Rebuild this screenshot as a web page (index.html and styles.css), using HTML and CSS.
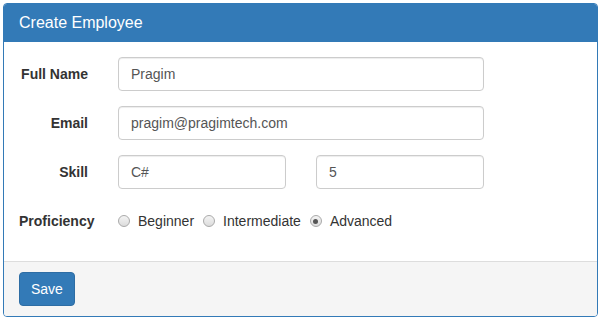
FILE: index.html
```html
<!DOCTYPE html>
<html lang="en">
<head>
  <meta charset="UTF-8" />
  <meta name="viewport" content="width=device-width, initial-scale=1" />
  <title>Create Employee</title>
  <link rel="stylesheet" href="styles.css">
</head>
<body>
  <form class="panel">
    <div class="panel-heading">
      <h3 class="panel-title">Create Employee</h3>
    </div>

    <div class="panel-body">
      <div class="form-group">
        <label class="control-label" for="fullName">Full Name</label>
        <input id="fullName" class="form-control wide" type="text" value="Pragim" />
      </div>

      <div class="form-group">
        <label class="control-label" for="email">Email</label>
        <input id="email" class="form-control wide" type="text" value="pragim@pragimtech.com" />
      </div>

      <div class="form-group">
        <label class="control-label" for="skillName">Skill</label>
        <input id="skillName" class="form-control half" type="text" value="C#" />
        <input id="skillYears" class="form-control half" type="text" value="5" />
      </div>

      <div class="form-group">
        <label class="control-label">Proficiency</label>
        <div class="radios">
          <label class="radio-option"><input type="radio" name="proficiency" value="beginner" />Beginner</label>
          <label class="radio-option"><input type="radio" name="proficiency" value="intermediate" />Intermediate</label>
          <label class="radio-option"><input type="radio" name="proficiency" value="advanced" checked />Advanced</label>
        </div>
      </div>
    </div>

    <div class="panel-footer">
      <button type="button" class="btn">Save</button>
    </div>
  </form>
</body>
</html>
```

FILE: styles.css
```css
body {
  margin: 3px;
  font-family: "Liberation Sans", Arial, sans-serif;
  font-size: 14px;
  line-height: 20px;
  color: #333;
  background-color: #fff;
}
.panel {
  margin: 0;
  border: 1px solid #337ab7;
  border-radius: 4px;
  background: #fff;
}
.panel-heading {
  padding: 10px 15px;
  background-color: #337ab7;
  border-bottom: 1px solid #337ab7;
  border-radius: 3px 3px 0 0;
  color: #fff;
}
.panel-title {
  margin: 0;
  font-size: 16px;
  font-weight: normal;
  line-height: 17px;
}
.panel-body {
  padding: 15px;
}
.form-group {
  display: flex;
  align-items: flex-start;
  margin-bottom: 15px;
}
.control-label {
  flex: none;
  width: 69px;
  margin-right: 30px;
  padding-top: 7px;
  font-weight: bold;
  text-align: right;
  white-space: nowrap;
}
.form-control {
  box-sizing: border-box;
  height: 34px;
  padding: 6px 12px;
  font-family: inherit;
  font-size: 14px;
  line-height: 20px;
  color: #555;
  background-color: #fff;
  border: 1px solid #ccc;
  border-radius: 4px;
  box-shadow: inset 0 1px 1px rgba(0, 0, 0, 0.075);
  outline: none;
}
.wide {
  width: 366px;
}
.half {
  width: 168px;
  margin-right: 30px;
}
.radios {
  display: flex;
  padding-top: 7px;
}
.radio-option {
  display: inline-flex;
  align-items: center;
  margin-right: 9px;
  color: #333;
}
.radio-option input {
  appearance: none;
  -webkit-appearance: none;
  box-sizing: border-box;
  width: 12px;
  height: 12px;
  margin: 0 8px 0 0;
  border: 1px solid #aaa;
  border-radius: 50%;
  background: linear-gradient(#f4f4f4, #dcdcdc);
  position: relative;
}
.radio-option input:checked::after {
  content: "";
  position: absolute;
  left: 2.5px;
  top: 2.5px;
  width: 5px;
  height: 5px;
  border-radius: 50%;
  background: #555;
}
.panel-footer {
  padding: 10px 15px;
  background-color: #f5f5f5;
  border-top: 1px solid #ddd;
  border-radius: 0 0 3px 3px;
}
.btn {
  padding: 6px 11px;
  font-family: inherit;
  font-size: 14px;
  line-height: 20px;
  color: #fff;
  background-color: #337ab7;
  border: 1px solid #2e6da4;
  border-radius: 4px;
  cursor: pointer;
}
```
